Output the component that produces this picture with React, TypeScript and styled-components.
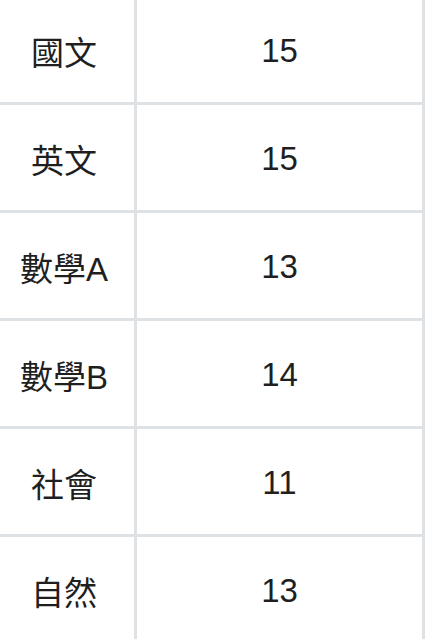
import React from "react";
import styled, { createGlobalStyle } from "styled-components";

const GlobalStyle = createGlobalStyle`
  html, body {
    margin: 0;
    padding: 0;
    background: #ffffff;
    overflow: hidden;
  }
`;

const lineColor = "#dfe2e5";

const Page = styled.div`
  width: 426px;
  height: 639px;
  overflow: hidden;
  background: #ffffff;
`;

const ScoreTable = styled.div`
  display: grid;
  grid-template-columns: 134px 285px;
  grid-auto-rows: 105px;
  gap: 3px;
  width: 422px;
  margin-top: -3px;
  background: ${lineColor};
  border-right: 3px solid ${lineColor};
`;

const Cell = styled.div<{ $subject?: boolean }>`
  display: flex;
  align-items: center;
  justify-content: center;
  background: #ffffff;
  color: #1f1f1f;
  font-family: "Liberation Sans", "Noto Sans CJK TC", sans-serif;
  font-size: 33px;
  padding-right: ${(p) => (p.$subject ? "6px" : "0")};
  padding-top: 2px;
`;

const rows = [
  { subject: "國文", score: 15 },
  { subject: "英文", score: 15 },
  { subject: "數學A", score: 13 },
  { subject: "數學B", score: 14 },
  { subject: "社會", score: 11 },
  { subject: "自然", score: 13 },
];

export default function App() {
  return (
    <Page>
      <GlobalStyle />
      <ScoreTable>
        {rows.map((r) => (
          <React.Fragment key={r.subject}>
            <Cell $subject>{r.subject}</Cell>
            <Cell>{r.score}</Cell>
          </React.Fragment>
        ))}
      </ScoreTable>
    </Page>
  );
}
